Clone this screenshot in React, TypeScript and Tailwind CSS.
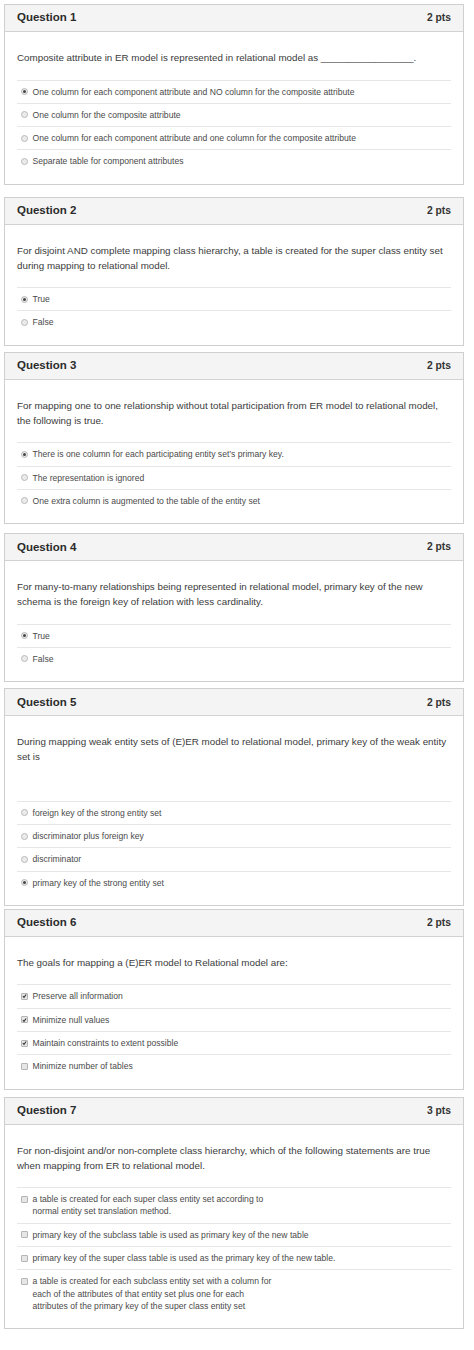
type Kind = "radio" | "check";

type Question = {
  num: number;
  pts: string;
  text: string[];
  kind: Kind;
  options: { label: string[]; on?: boolean }[];
  gap: string;
  extra?: boolean;
};

const questions: Question[] = [
  {
    num: 1,
    pts: "2 pts",
    text: ["Composite attribute in ER model is represented in relational model as _________________."],
    kind: "radio",
    gap: "mt-[4px]",
    options: [
      { label: ["One column for each component attribute and NO column for the composite attribute"], on: true },
      { label: ["One column for the composite attribute"] },
      { label: ["One column for each component attribute and one column for the composite attribute"] },
      { label: ["Separate table for component attributes"] },
    ],
  },
  {
    num: 2,
    pts: "2 pts",
    text: [
      "For disjoint AND complete mapping class hierarchy, a table is created for the super class entity set",
      "during mapping to relational model.",
    ],
    kind: "radio",
    gap: "mt-[12px]",
    options: [{ label: ["True"], on: true }, { label: ["False"] }],
  },
  {
    num: 3,
    pts: "2 pts",
    text: [
      "For mapping one to one relationship without total participation from ER model to relational model,",
      "the following is true.",
    ],
    kind: "radio",
    gap: "mt-[6px]",
    options: [
      { label: ["There is one column for each participating entity set\u2019s primary key."], on: true },
      { label: ["The representation is ignored"] },
      { label: ["One extra column is augmented to the table of the entity set"] },
    ],
  },
  {
    num: 4,
    pts: "2 pts",
    text: [
      "For many-to-many relationships being represented in relational model, primary key of the new",
      "schema is the foreign key of relation with less cardinality.",
    ],
    kind: "radio",
    gap: "mt-[9px]",
    options: [{ label: ["True"], on: true }, { label: ["False"] }],
  },
  {
    num: 5,
    pts: "2 pts",
    text: [
      "During mapping weak entity sets of (E)ER model to relational model, primary key of the weak entity",
      "set is",
    ],
    kind: "radio",
    gap: "mt-[6px]",
    extra: true,
    options: [
      { label: ["foreign key of the strong entity set"] },
      { label: ["discriminator plus foreign key"] },
      { label: ["discriminator"] },
      { label: ["primary key of the strong entity set"], on: true },
    ],
  },
  {
    num: 6,
    pts: "2 pts",
    text: ["The goals for mapping a (E)ER model to Relational model are:"],
    kind: "check",
    gap: "mt-[3px]",
    options: [
      { label: ["Preserve all information"], on: true },
      { label: ["Minimize null values"], on: true },
      { label: ["Maintain constraints to extent possible"], on: true },
      { label: ["Minimize number of tables"] },
    ],
  },
  {
    num: 7,
    pts: "3 pts",
    text: [
      "For non-disjoint and/or non-complete class hierarchy, which of the following statements are true",
      "when mapping from ER to relational model.",
    ],
    kind: "check",
    gap: "mt-[7px]",
    options: [
      { label: ["a table is created for each super class entity set according to", "normal entity set translation method."] },
      { label: ["primary key of the subclass table is used as primary key of the new table"] },
      { label: ["primary key of the super class table is used as the primary key of the new table."] },
      {
        label: [
          "a table is created for each subclass entity set with a column for",
          "each of the attributes of that entity set plus one for each",
          "attributes of the primary key of the super class entity set",
        ],
      },
    ],
  },
];

function Radio({ on }: { on?: boolean }) {
  return (
    <span className="mt-[2.5px] ml-[3.5px] mr-[5px] flex h-[7px] w-[7px] shrink-0 items-center justify-center rounded-full border border-[#b9b9b9] bg-[#ebebeb]">
      {on && <span className="h-[3px] w-[3px] rounded-full bg-[#444]" />}
    </span>
  );
}

function Check({ on }: { on?: boolean }) {
  return (
    <span className="mt-[2.5px] ml-[3.5px] mr-[5px] flex h-[7px] w-[7px] shrink-0 items-center justify-center rounded-[1px] border border-[#b5b5b5] bg-[#e6e6e6]">
      {on && (
        <svg width="6" height="6" viewBox="0 0 6 6">
          <path d="M1 3.2 L2.4 4.6 L5 1.2" fill="none" stroke="#333" strokeWidth="1.3" />
        </svg>
      )}
    </span>
  );
}

function Card({ q }: { q: Question }) {
  return (
    <div className={`${q.gap} mx-[4px] w-[460px] border border-[#cfcfcf] bg-white`}>
      <div className="flex h-[27px] items-center justify-between border-b border-[#d2d2d2] bg-[#f4f4f4] px-[12px]">
        <span className="text-[11.5px] font-bold text-[#2b2b2b]">Question {q.num}</span>
        <span className="text-[10.3px] font-bold text-[#333]">{q.pts}</span>
      </div>
      <div className="px-[12px] pt-[18px] pb-[11px]">
        <div className="text-[9.8px] leading-[15px] text-[#3b3b3b]">
          {q.text.map((t, i) => (
            <div key={i}>{t}</div>
          ))}
        </div>
        {q.extra && <div className="h-[22px]" />}
        <div className="mt-[14.5px]">
          {q.options.map((o, i) => (
            <div key={i} className="flex items-start border-t border-[#e6e6e6] py-[5px]">
              {q.kind === "radio" ? <Radio on={o.on} /> : <Check on={o.on} />}
              <div className="text-[8.6px] leading-[12.3px] text-[#4a4a4a]">
                {o.label.map((l, j) => (
                  <div key={j}>{l}</div>
                ))}
              </div>
            </div>
          ))}
        </div>
      </div>
    </div>
  );
}

export default function App() {
  return (
    <div className="min-h-[1350px] w-[474px] bg-white pb-[20px] font-['Liberation_Sans',Arial,sans-serif]">
      {questions.map((q) => (
        <Card key={q.num} q={q} />
      ))}
    </div>
  );
}
